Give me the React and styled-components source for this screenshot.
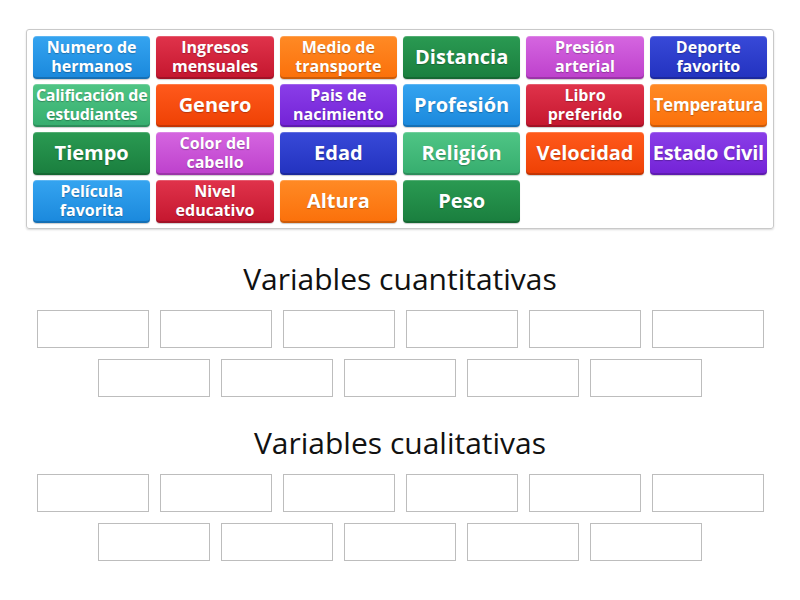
import React from "react";
import styled, { createGlobalStyle } from "styled-components";

const Global = createGlobalStyle`
  html, body { margin: 0; padding: 0; background: #fff; }
  body { font-family: "Open Sans", "Noto Sans", sans-serif; }
`;

const Page = styled.div`
  width: 800px;
  padding: 29px 26px 0;
  box-sizing: border-box;
`;

const Board = styled.div`
  box-sizing: border-box;
  width: 748px;
  border: 1px solid #c9c9c9;
  border-radius: 3px;
  box-shadow: 0 1px 2px rgba(0, 0, 0, 0.15);
  padding: 6px 6px 5px;
  display: grid;
  grid-template-columns: repeat(6, 1fr);
  column-gap: 6px;
  row-gap: 5px;
`;

const palette = {
  blue: ["#35a4f0", "#1a88dc"],
  red: ["#e0334b", "#c4162e"],
  orange: ["#ff8a25", "#fb700a"],
  dkgreen: ["#2a9a52", "#1a7e3e"],
  violet: ["#d566e0", "#bd40cc"],
  dkblue: ["#3849d8", "#2232bf"],
  green: ["#4fc585", "#36ad6e"],
  redorange: ["#ff5a1c", "#ee4004"],
  purple: ["#8a3ee8", "#7322d6"],
};

const Tile = styled.div`
  height: 43px;
  border-radius: 4px;
  background: linear-gradient(${(p) => palette[p.$c][0]}, ${(p) => palette[p.$c][1]});
  box-shadow: inset 0 -2px 0 rgba(0, 0, 0, 0.18), inset 0 1px 0 rgba(255, 255, 255, 0.2),
    0 1px 1px rgba(0, 0, 0, 0.2);
  display: flex;
  align-items: center;
  justify-content: center;
  text-align: center;
  color: #fff;
  font-weight: 700;
  font-size: ${(p) => p.$fs}px;
  line-height: ${(p) => (p.$fs > 17 ? 1.2 : 1.17)};
  letter-spacing: ${(p) => p.$ls || 0}px;
  text-shadow: 0 1px 1px rgba(0, 0, 0, 0.25);
  white-space: pre-line;
  overflow: hidden;
  padding-bottom: 2px;
  box-sizing: border-box;
`;

const Section = styled.div`
  margin-top: ${(p) => p.$mt}px;
  display: flex;
  flex-direction: column;
  align-items: center;
  width: 748px;
`;

const Title = styled.div`
  font-size: 30px;
  line-height: 36px;
  color: #111;
  margin-bottom: 13px;
`;

const Drops = styled.div`
  display: flex;
  flex-wrap: wrap;
  justify-content: center;
  column-gap: 11px;
  row-gap: 11px;
  width: 740px;
`;

const Drop = styled.div`
  width: 112px;
  height: 38px;
  box-sizing: border-box;
  border: 1px solid #bdbdbd;
  background: #fff;
`;

const tiles = [
  ["Numero de\nhermanos", "blue", 16],
  ["Ingresos\nmensuales", "red", 16],
  ["Medio de\ntransporte", "orange", 16],
  ["Distancia", "dkgreen", 20],
  ["Presión\narterial", "violet", 16],
  ["Deporte\nfavorito", "dkblue", 16],
  ["Calificación de\nestudiantes", "green", 16, -0.3],
  ["Genero", "redorange", 20],
  ["Pais de\nnacimiento", "purple", 16],
  ["Profesión", "blue", 20],
  ["Libro\npreferido", "red", 16],
  ["Temperatura", "orange", 17, -0.2],
  ["Tiempo", "dkgreen", 20],
  ["Color del\ncabello", "violet", 16],
  ["Edad", "dkblue", 20],
  ["Religión", "green", 20],
  ["Velocidad", "redorange", 20],
  ["Estado Civil", "purple", 20, -0.3],
  ["Película\nfavorita", "blue", 16],
  ["Nivel\neducativo", "red", 16],
  ["Altura", "orange", 20],
  ["Peso", "dkgreen", 20],
];

const Group = ({ title, mt }) => (
  <Section $mt={mt}>
    <Title>{title}</Title>
    <Drops>
      {Array.from({ length: 11 }).map((_, i) => (
        <Drop key={i} />
      ))}
    </Drops>
  </Section>
);

export default function App() {
  return (
    <>
      <Global />
      <Page>
        <Board>
          {tiles.map(([t, c, fs, ls], i) => (
            <Tile key={i} $c={c} $fs={fs} $ls={ls}>
              {t}
            </Tile>
          ))}
        </Board>
        <Group title="Variables cuantitativas" mt={32} />
        <Group title="Variables cualitativas" mt={28} />
      </Page>
    </>
  );
}
